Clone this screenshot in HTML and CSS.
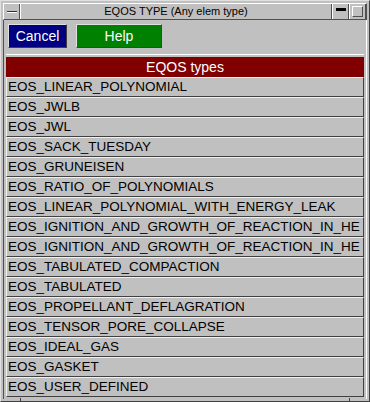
FILE: index.html
```html
<!DOCTYPE html>
<html lang="en">
<head>
    <meta charset="UTF-8">
    <meta name="viewport" content="width=device-width, initial-scale=1.0">
    <title>EQOS TYPE (Any elem type)</title>
    <link rel="stylesheet" href="styles.css">
</head>
<body>
    <div class="window">
        <div class="titlebar">
            <div class="tb-btn menu-btn"><span class="dash"></span></div>
            <div class="title">EQOS TYPE (Any elem type)</div>
            <div class="tb-btn min-btn"><span class="bar"></span></div>
            <div class="tb-btn max-btn"><span class="box"></span></div>
        </div>
        <div class="content">
            <div class="actions">
                <button class="btn cancel">Cancel</button>
                <button class="btn help">Help</button>
            </div>
            <div class="panel">
                <div class="panel-head">EQOS types</div>
                <div class="row">EOS_LINEAR_POLYNOMIAL</div>
                <div class="row">EOS_JWLB</div>
                <div class="row">EOS_JWL</div>
                <div class="row">EOS_SACK_TUESDAY</div>
                <div class="row">EOS_GRUNEISEN</div>
                <div class="row">EOS_RATIO_OF_POLYNOMIALS</div>
                <div class="row">EOS_LINEAR_POLYNOMIAL_WITH_ENERGY_LEAK</div>
                <div class="row">EOS_IGNITION_AND_GROWTH_OF_REACTION_IN_HE</div>
                <div class="row">EOS_IGNITION_AND_GROWTH_OF_REACTION_IN_HE</div>
                <div class="row">EOS_TABULATED_COMPACTION</div>
                <div class="row">EOS_TABULATED</div>
                <div class="row">EOS_PROPELLANT_DEFLAGRATION</div>
                <div class="row">EOS_TENSOR_PORE_COLLAPSE</div>
                <div class="row">EOS_IDEAL_GAS</div>
                <div class="row">EOS_GASKET</div>
                <div class="row">EOS_USER_DEFINED</div>
            </div>
        </div>
        <span class="corner c-left"></span>
        <span class="corner c-right"></span>
    </div>
</body>
</html>
```

FILE: styles.css
```css
body {
    margin: 0;
    padding: 0;
    background-color: #c0c0c0;
    font-family: 'Liberation Sans', Arial, sans-serif;
}

.window {
    position: relative;
    width: 370px;
    height: 402px;
    box-sizing: border-box;
    background-color: #c0c0c0;
    border: 1px solid;
    border-color: #e0e0e0 #404040 #404040 #e0e0e0;
    padding: 2px;
    overflow: hidden;
}

.titlebar {
    display: flex;
    height: 15px;
    border: 1px solid;
    border-color: #ffffff #505050 #505050 #ffffff;
}

.tb-btn {
    width: 15px;
    display: flex;
    align-items: center;
    justify-content: center;
    border-left: 1px solid #ffffff;
    border-right: 1px solid #505050;
}

.menu-btn {
    border-left: none;
}

.dash {
    width: 10px;
    height: 1px;
    background-color: #303030;
    border-bottom: 1px solid #ffffff;
}

.bar {
    width: 10px;
    height: 3px;
    background-color: #000000;
    margin-bottom: 5px;
}

.box {
    width: 9px;
    height: 9px;
    border: 1px solid;
    border-color: #ffffff #505050 #505050 #ffffff;
}

.title {
    flex: 1;
    text-align: center;
    font-size: 11px;
    line-height: 15px;
    color: #000000;
    border-left: 1px solid #ffffff;
    border-right: 1px solid #505050;
}

.content {
    height: 379px;
    box-sizing: border-box;
    border-left: 1px solid #505050;
    border-right: 1px solid #ffffff;
    padding: 4px 2px 0 2px;
}

.actions {
    display: flex;
    gap: 9px;
    padding-left: 2px;
    height: 24px;
}

.btn {
    height: 24px;
    border: 1px solid;
    border-color: #e0e0e0 #404040 #404040 #e0e0e0;
    font-family: 'Liberation Sans', Arial, sans-serif;
    font-size: 14px;
    color: #ffffff;
    padding: 0;
    margin: 0;
}

.cancel {
    width: 59px;
    background-color: #000080;
}

.help {
    width: 86px;
    background-color: #008000;
}

.panel {
    margin-top: 6px;
    border-top: 1px solid #ffffff;
    padding-top: 2px;
}

.panel-head {
    height: 20px;
    line-height: 20px;
    background-color: #800000;
    color: #ffffff;
    text-align: center;
    font-size: 14px;
}

.row {
    height: 18px;
    line-height: 18px;
    border: 1px solid;
    border-color: #f0f0f0 #404040 #404040 #f0f0f0;
    padding-left: 1px;
    font-size: 13.5px;
    color: #000000;
    white-space: nowrap;
    overflow: hidden;
}

.corner {
    position: absolute;
    bottom: 0;
    width: 1px;
    height: 3px;
    background-color: #404040;
}

.c-left {
    left: 19px;
}

.c-right {
    right: 19px;
}
```
